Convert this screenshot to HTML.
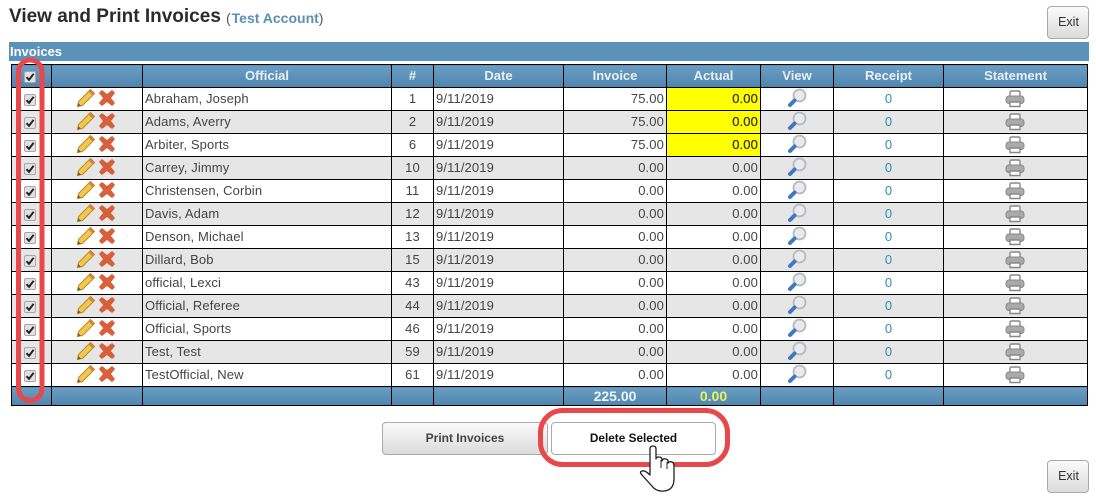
<!DOCTYPE html>
<html><head><meta charset="utf-8"><style>
html,body{margin:0;padding:0;background:#fff}
body{width:1096px;height:504px;position:relative;overflow:hidden;font-family:"Liberation Sans",Arial,sans-serif;color:#333}
.abs{position:absolute}
h1{position:absolute;left:9px;top:5px;margin:0;font-size:19px;line-height:24px;font-weight:bold;color:#2b2b2b;white-space:nowrap}
.sub{position:absolute;left:226px;top:9px;font-size:14px;line-height:18px;color:#555;white-space:nowrap}
.sub b{color:#5a8fb5;margin-left:1px}
.btn{position:absolute;box-sizing:border-box;border:1px solid #aaa;border-radius:4px;background:linear-gradient(#fbfbfb,#dcdcdc);text-align:center;font-weight:bold;font-size:12px;color:#444}
.bar{position:absolute;left:9px;top:42px;width:1080px;height:19px;background:#5b92ba;color:#fff;font-weight:bold;font-size:13px;line-height:19px;text-indent:1px}
table{position:absolute;left:11px;top:64px;width:1076px;border-collapse:collapse;table-layout:fixed;font-size:13px;letter-spacing:.12px;color:#444}
td,th{border:1px solid #000;padding:0 2px;height:22px;box-sizing:border-box;white-space:nowrap;overflow:hidden;line-height:20px}
th{background:linear-gradient(#6a9dc3,#4f86ae);color:#e8f0f6;font-size:13px;letter-spacing:0;text-align:center;height:23px}
tr.r td{height:23px;padding-top:0}
tr.g td{background:#e6e6e6}
tfoot td{background:linear-gradient(#6a9dc3,#4f86ae);height:19px;line-height:17px;color:#eef4f8;font-weight:bold;font-size:14px;letter-spacing:0;text-align:center}
.n{text-align:right}.c{text-align:center}
td.y{background:#ff0!important;color:#333;-webkit-text-stroke:.25px #333}
.l{color:#2f8fb0}
.cb{display:block;box-sizing:border-box;margin:1px 0 0 10px;width:12px;height:12px;border:1px solid #a8a8a8;border-radius:2px;background:#e2e2e2;position:relative}
.cb svg{position:absolute;left:0;top:0}
th .cb{margin-top:2px}
.ic{vertical-align:middle;display:inline-block;position:relative;top:-1px}
tr.r td:nth-child(2){text-align:left;padding-left:24px}
tr.r td:nth-child(2) svg+svg{margin-left:2px}
tr.r td:nth-child(10) svg{margin-left:-1px}
</style></head><body>
<svg width="0" height="0" style="position:absolute">
<symbol id="ck" viewBox="0 0 10 10"><path d="M1.5 5.2L4 7.8L8.6 1.8" fill="none" stroke="#222" stroke-width="2"/></symbol>
<symbol id="pen" viewBox="0 0 20 20"><path d="M14.5 1.5L18.5 5.5L6.5 17.5L1.5 18.5L2.5 13.5Z" fill="#f0c84e" stroke="#b98a2c" stroke-width="1"/><path d="M14.5 1.5L18.5 5.5L16.5 7.5L12.5 3.5Z" fill="#d9803c"/><path d="M1.5 18.5L2.2 15L5 17.8Z" fill="#7a5a30"/></symbol>
<symbol id="x" viewBox="0 0 18 18"><path d="M4 2L9 6L14 2L16 4L12 9L16 14L14 16L9 12L4 16L2 14L6 9L2 4Z" fill="#d9603a" stroke="#d4603c" stroke-width="1.6" stroke-linejoin="round"/></symbol>
<symbol id="mg" viewBox="0 0 20 20"><circle cx="12.5" cy="7.5" r="6" fill="#e8eaed" stroke="#b6babf" stroke-width="1.8"/><path d="M7.5 12.5L3 17" stroke="#3f78c4" stroke-width="4" stroke-linecap="round"/></symbol>
<symbol id="pr" viewBox="0 0 20 18"><path d="M5 7V2.5Q5 1 6.5 1H13.5Q15 1 15 2.5V7" fill="#fff" stroke="#888" stroke-width="1.4"/><rect x="1" y="6" width="18" height="7.5" rx="3" fill="#aaa" stroke="#888"/><path d="M5 12H15V16.5H5Z" fill="#fff" stroke="#888" stroke-width="1.4"/></symbol>
</svg>
<h1>View and Print Invoices</h1>
<div class="sub">(<b>Test Account</b>)</div>
<div class="btn" style="left:1047px;top:6px;width:42px;height:33px;line-height:31px;font-weight:normal;color:#333;font-size:12.5px;text-indent:1px">Exit</div>
<div class="bar">Invoices</div>
<table>
<colgroup><col style="width:40px"><col style="width:91px"><col style="width:249px"><col style="width:42px"><col style="width:130px"><col style="width:103px"><col style="width:94px"><col style="width:73px"><col style="width:110px"><col style="width:144px"></colgroup>
<thead><tr><th><span class="cb"><svg width="10" height="10"><use href="#ck"/></svg></span></th><th></th><th>Official</th><th>#</th><th>Date</th><th>Invoice</th><th>Actual</th><th>View</th><th>Receipt</th><th>Statement</th></tr></thead>
<tbody>
<tr class="r"><td><span class="cb"><svg width="10" height="10"><use href="#ck"/></svg></span></td><td><svg class="ic" width="20" height="20"><use href="#pen"/></svg><svg class="ic" width="18" height="18"><use href="#x"/></svg></td><td>Abraham, Joseph</td><td class="c">1</td><td>9/11/2019</td><td class="n">75.00</td><td class="n y">0.00</td><td class="c"><svg class="ic" width="20" height="20"><use href="#mg"/></svg></td><td class="c l">0</td><td class="c"><svg class="ic" width="20" height="18"><use href="#pr"/></svg></td></tr>
<tr class="r g"><td><span class="cb"><svg width="10" height="10"><use href="#ck"/></svg></span></td><td><svg class="ic" width="20" height="20"><use href="#pen"/></svg><svg class="ic" width="18" height="18"><use href="#x"/></svg></td><td>Adams, Averry</td><td class="c">2</td><td>9/11/2019</td><td class="n">75.00</td><td class="n y">0.00</td><td class="c"><svg class="ic" width="20" height="20"><use href="#mg"/></svg></td><td class="c l">0</td><td class="c"><svg class="ic" width="20" height="18"><use href="#pr"/></svg></td></tr>
<tr class="r"><td><span class="cb"><svg width="10" height="10"><use href="#ck"/></svg></span></td><td><svg class="ic" width="20" height="20"><use href="#pen"/></svg><svg class="ic" width="18" height="18"><use href="#x"/></svg></td><td>Arbiter, Sports</td><td class="c">6</td><td>9/11/2019</td><td class="n">75.00</td><td class="n y">0.00</td><td class="c"><svg class="ic" width="20" height="20"><use href="#mg"/></svg></td><td class="c l">0</td><td class="c"><svg class="ic" width="20" height="18"><use href="#pr"/></svg></td></tr>
<tr class="r g"><td><span class="cb"><svg width="10" height="10"><use href="#ck"/></svg></span></td><td><svg class="ic" width="20" height="20"><use href="#pen"/></svg><svg class="ic" width="18" height="18"><use href="#x"/></svg></td><td>Carrey, Jimmy</td><td class="c">10</td><td>9/11/2019</td><td class="n">0.00</td><td class="n">0.00</td><td class="c"><svg class="ic" width="20" height="20"><use href="#mg"/></svg></td><td class="c l">0</td><td class="c"><svg class="ic" width="20" height="18"><use href="#pr"/></svg></td></tr>
<tr class="r"><td><span class="cb"><svg width="10" height="10"><use href="#ck"/></svg></span></td><td><svg class="ic" width="20" height="20"><use href="#pen"/></svg><svg class="ic" width="18" height="18"><use href="#x"/></svg></td><td>Christensen, Corbin</td><td class="c">11</td><td>9/11/2019</td><td class="n">0.00</td><td class="n">0.00</td><td class="c"><svg class="ic" width="20" height="20"><use href="#mg"/></svg></td><td class="c l">0</td><td class="c"><svg class="ic" width="20" height="18"><use href="#pr"/></svg></td></tr>
<tr class="r g"><td><span class="cb"><svg width="10" height="10"><use href="#ck"/></svg></span></td><td><svg class="ic" width="20" height="20"><use href="#pen"/></svg><svg class="ic" width="18" height="18"><use href="#x"/></svg></td><td>Davis, Adam</td><td class="c">12</td><td>9/11/2019</td><td class="n">0.00</td><td class="n">0.00</td><td class="c"><svg class="ic" width="20" height="20"><use href="#mg"/></svg></td><td class="c l">0</td><td class="c"><svg class="ic" width="20" height="18"><use href="#pr"/></svg></td></tr>
<tr class="r"><td><span class="cb"><svg width="10" height="10"><use href="#ck"/></svg></span></td><td><svg class="ic" width="20" height="20"><use href="#pen"/></svg><svg class="ic" width="18" height="18"><use href="#x"/></svg></td><td>Denson, Michael</td><td class="c">13</td><td>9/11/2019</td><td class="n">0.00</td><td class="n">0.00</td><td class="c"><svg class="ic" width="20" height="20"><use href="#mg"/></svg></td><td class="c l">0</td><td class="c"><svg class="ic" width="20" height="18"><use href="#pr"/></svg></td></tr>
<tr class="r g"><td><span class="cb"><svg width="10" height="10"><use href="#ck"/></svg></span></td><td><svg class="ic" width="20" height="20"><use href="#pen"/></svg><svg class="ic" width="18" height="18"><use href="#x"/></svg></td><td>Dillard, Bob</td><td class="c">15</td><td>9/11/2019</td><td class="n">0.00</td><td class="n">0.00</td><td class="c"><svg class="ic" width="20" height="20"><use href="#mg"/></svg></td><td class="c l">0</td><td class="c"><svg class="ic" width="20" height="18"><use href="#pr"/></svg></td></tr>
<tr class="r"><td><span class="cb"><svg width="10" height="10"><use href="#ck"/></svg></span></td><td><svg class="ic" width="20" height="20"><use href="#pen"/></svg><svg class="ic" width="18" height="18"><use href="#x"/></svg></td><td>official, Lexci</td><td class="c">43</td><td>9/11/2019</td><td class="n">0.00</td><td class="n">0.00</td><td class="c"><svg class="ic" width="20" height="20"><use href="#mg"/></svg></td><td class="c l">0</td><td class="c"><svg class="ic" width="20" height="18"><use href="#pr"/></svg></td></tr>
<tr class="r g"><td><span class="cb"><svg width="10" height="10"><use href="#ck"/></svg></span></td><td><svg class="ic" width="20" height="20"><use href="#pen"/></svg><svg class="ic" width="18" height="18"><use href="#x"/></svg></td><td>Official, Referee</td><td class="c">44</td><td>9/11/2019</td><td class="n">0.00</td><td class="n">0.00</td><td class="c"><svg class="ic" width="20" height="20"><use href="#mg"/></svg></td><td class="c l">0</td><td class="c"><svg class="ic" width="20" height="18"><use href="#pr"/></svg></td></tr>
<tr class="r"><td><span class="cb"><svg width="10" height="10"><use href="#ck"/></svg></span></td><td><svg class="ic" width="20" height="20"><use href="#pen"/></svg><svg class="ic" width="18" height="18"><use href="#x"/></svg></td><td>Official, Sports</td><td class="c">46</td><td>9/11/2019</td><td class="n">0.00</td><td class="n">0.00</td><td class="c"><svg class="ic" width="20" height="20"><use href="#mg"/></svg></td><td class="c l">0</td><td class="c"><svg class="ic" width="20" height="18"><use href="#pr"/></svg></td></tr>
<tr class="r g"><td><span class="cb"><svg width="10" height="10"><use href="#ck"/></svg></span></td><td><svg class="ic" width="20" height="20"><use href="#pen"/></svg><svg class="ic" width="18" height="18"><use href="#x"/></svg></td><td>Test, Test</td><td class="c">59</td><td>9/11/2019</td><td class="n">0.00</td><td class="n">0.00</td><td class="c"><svg class="ic" width="20" height="20"><use href="#mg"/></svg></td><td class="c l">0</td><td class="c"><svg class="ic" width="20" height="18"><use href="#pr"/></svg></td></tr>
<tr class="r"><td><span class="cb"><svg width="10" height="10"><use href="#ck"/></svg></span></td><td><svg class="ic" width="20" height="20"><use href="#pen"/></svg><svg class="ic" width="18" height="18"><use href="#x"/></svg></td><td>TestOfficial, New</td><td class="c">61</td><td>9/11/2019</td><td class="n">0.00</td><td class="n">0.00</td><td class="c"><svg class="ic" width="20" height="20"><use href="#mg"/></svg></td><td class="c l">0</td><td class="c"><svg class="ic" width="20" height="18"><use href="#pr"/></svg></td></tr>
</tbody>
<tfoot><tr><td></td><td></td><td></td><td></td><td></td><td>225.00</td><td style="color:#e8f55a">0.00</td><td></td><td></td><td></td></tr></tfoot>
</table>
<div class="btn" style="left:382px;top:422px;width:166px;height:33px;line-height:30px">Print Invoices</div>
<div class="btn" style="left:551px;top:422px;width:165px;height:33px;line-height:30px;background:#fff;color:#111;font-size:11.8px">Delete Selected</div>
<svg class="abs" style="left:0;top:0" width="1096" height="504">
<rect x="18.5" y="60" width="23.5" height="340.5" rx="11.7" fill="none" stroke="#e8484a" stroke-width="5"/>
<rect x="540.5" y="410.5" width="187" height="54" rx="22" fill="none" stroke="#e8484a" stroke-width="5"/>
<path d="M650 469V449Q650 446 653 446Q656 446 656 449V459Q656 457 659 457Q662 457 662 460V461Q663 458 666 459Q669 460 668 463Q670 461 672 462Q674 463 674 466V479Q674 490 664 491Q656 492 651 485L642 475Q639 472 642 471Q645 470 650 475Z" fill="#fff" stroke="#222" stroke-width="1.3" stroke-linejoin="round"/>
<path d="M661 460V468M667 462V469" stroke="#222" stroke-width="1" fill="none"/>
</svg>
<div class="btn" style="left:1047px;top:460px;width:42px;height:33px;line-height:31px;font-weight:normal;color:#333;font-size:12.5px;text-indent:1px">Exit</div>
</body></html>
